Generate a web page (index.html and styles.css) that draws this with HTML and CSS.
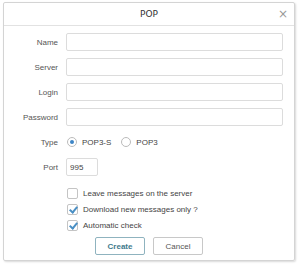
FILE: index.html
```html
<html lang="en">
<head>
    <meta charset="UTF-8">
    <title>POP</title>
    <link rel="stylesheet" href="styles.css">
</head>
<body>
    <div class="dialog">
        <div class="title">
            <span>POP</span>
            <span class="close">&#215;</span>
        </div>
        <form class="form" onsubmit="return false">
            <label>Name</label>
            <input type="text" class="field">
            <label>Server</label>
            <input type="text" class="field">
            <label>Login</label>
            <input type="text" class="field">
            <label>Password</label>
            <input type="password" class="field">
            <label>Type</label>
            <div class="radios">
                <span class="radio on"></span><span class="opt">POP3-S</span>
                <span class="radio"></span><span class="opt">POP3</span>
            </div>
            <label>Port</label>
            <div><input type="text" class="field port" value="995"></div>
            <div></div>
            <div class="checks">
                <div class="check"><span class="box"></span>Leave messages on the server</div>
                <div class="check"><span class="box on"></span>Download new messages only ?</div>
                <div class="check"><span class="box on"></span>Automatic check</div>
            </div>
        </form>
        <div class="buttons">
            <button class="btn create">Create</button>
            <button class="btn">Cancel</button>
        </div>
    </div>
</body>
</html>
```

FILE: styles.css
```css
body {
    margin: 0;
    background: #fff;
    font-family: "Liberation Sans", Arial, sans-serif;
    font-size: 8px;
    color: #444;
}

.dialog {
    margin: 2px 3px 0 3px;
    width: 292px;
    height: 259px;
    border: 1px solid #d4d4d4;
    box-shadow: 1px 1px 2px rgba(0, 0, 0, 0.15);
    border-radius: 2px;
    box-sizing: border-box;
}

.title {
    height: 22px;
    border-bottom: 1px solid #e2e2e2;
    display: flex;
    align-items: center;
    justify-content: center;
    position: relative;
    font-family: "DejaVu Sans", sans-serif;
    font-size: 9px;
    color: #333;
}
.close {
    position: absolute;
    right: 6px;
    top: 4px;
    font-size: 12px;
    color: #999;
}

.form {
    margin: 7px 11px 0 0;
    display: grid;
    grid-template-columns: 54px 1fr;
    column-gap: 8px;
    row-gap: 7px;
    align-items: center;
}
.form label {
    text-align: right;
    color: #555;
}

.field {
    height: 18px;
    border: 1px solid #dcdcdc;
    border-radius: 2px;
    box-sizing: border-box;
    margin: 0;
    font-family: inherit;
    font-size: 8px;
    padding: 0 4px;
    color: #444;
}
.port {
    width: 32px;
    padding: 0 3px;
}

.radios {
    display: flex;
    align-items: center;
    height: 18px;
    padding-left: 1px;
}
.radio {
    width: 10px;
    height: 10px;
    border: 1px solid #bbb;
    border-radius: 50%;
    box-sizing: border-box;
    margin-right: 5px;
    position: relative;
}
.radio.on::after {
    content: "";
    position: absolute;
    left: 2px;
    top: 2px;
    width: 4px;
    height: 4px;
    border-radius: 50%;
    background: #3d85c6;
}
.opt {
    margin-right: 10px;
}

.checks {
    margin-top: 5px;
    display: flex;
    flex-direction: column;
    gap: 5px;
}
.check {
    display: flex;
    align-items: center;
    height: 11px;
}
.box {
    width: 11px;
    height: 11px;
    border: 1px solid #c4c4c4;
    border-radius: 2px;
    box-sizing: border-box;
    margin-left: 1px;
    margin-right: 5px;
    position: relative;
}
.box.on::after {
    content: "";
    position: absolute;
    left: 3px;
    top: 0px;
    width: 3px;
    height: 6px;
    border: solid #4a8fc4;
    border-width: 0 2px 2px 0;
    transform: rotate(40deg);
}

.buttons {
    display: flex;
    justify-content: center;
    gap: 8px;
    margin-top: 6px;
}
.btn {
    width: 50px;
    height: 18px;
    background: #fff;
    border: 1px solid #c8c8c8;
    border-radius: 2px;
    font-family: inherit;
    font-size: 8px;
    color: #555;
    padding: 0;
}
.create {
    border-color: #8fb3bf;
    color: #3f7a8c;
    font-weight: bold;
}
```
